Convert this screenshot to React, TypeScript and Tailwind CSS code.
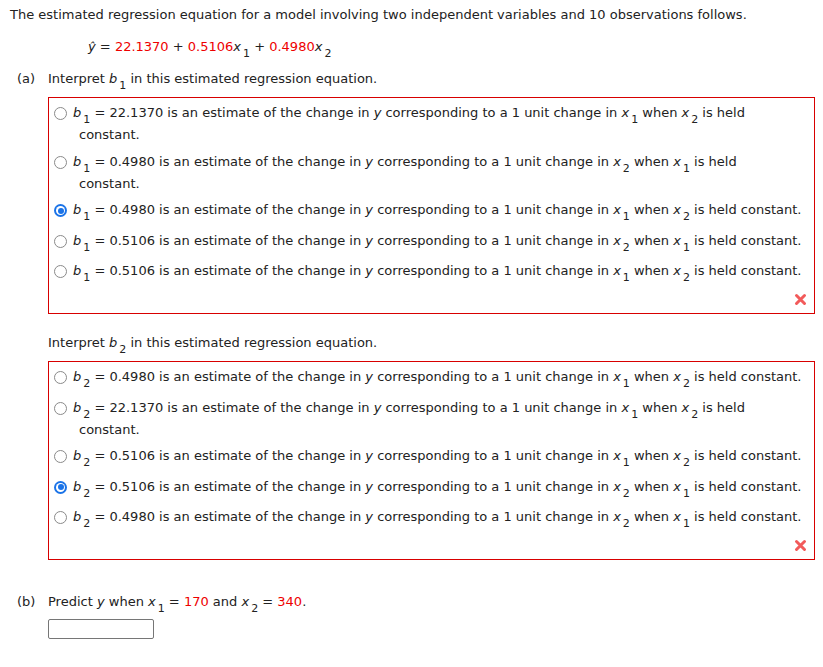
import React from "react";

type Opt = {
  coef: string;
  val: string;
  xi: string;
  xj: string;
  checked?: boolean;
  wrap?: boolean;
};

const partA: Opt[] = [
  { coef: "1", val: "22.1370", xi: "1", xj: "2", wrap: true },
  { coef: "1", val: "0.4980", xi: "2", xj: "1", wrap: true },
  { coef: "1", val: "0.4980", xi: "1", xj: "2", checked: true },
  { coef: "1", val: "0.5106", xi: "2", xj: "1" },
  { coef: "1", val: "0.5106", xi: "1", xj: "2" },
];

const partB: Opt[] = [
  { coef: "2", val: "0.4980", xi: "1", xj: "2" },
  { coef: "2", val: "22.1370", xi: "1", xj: "2", wrap: true },
  { coef: "2", val: "0.5106", xi: "1", xj: "2" },
  { coef: "2", val: "0.5106", xi: "2", xj: "1", checked: true },
  { coef: "2", val: "0.4980", xi: "2", xj: "1" },
];

// subscript that still counts for the line box
function Sub({ c }: { c: string }) {
  return (
    <span className="text-[11px] leading-[13px] align-[-6px] ml-[2px] not-italic">
      {c}
    </span>
  );
}

function V({ v, s }: { v: string; s?: string }) {
  return (
    <span className="whitespace-nowrap">
      <i>{v}</i>
      {s && <Sub c={s} />}
    </span>
  );
}

function Radio({ checked }: { checked?: boolean }) {
  if (checked) {
    return (
      <span className="mt-[3px] w-[13px] h-[13px] shrink-0 rounded-full bg-[#1a73e8] flex items-center justify-center">
        <span className="w-[9px] h-[9px] rounded-full bg-white flex items-center justify-center">
          <span className="w-[6px] h-[6px] rounded-full bg-[#1a73e8]" />
        </span>
      </span>
    );
  }
  return (
    <span className="mt-[3px] w-[13px] h-[13px] shrink-0 rounded-full border border-[#8a8a8a] bg-white" />
  );
}

function Cross() {
  return (
    <svg width="13" height="13" viewBox="0 0 13 13">
      <path
        d="M2.5 2.5 L10.5 10.5 M10.5 2.5 L2.5 10.5"
        stroke="#f25a5a"
        strokeWidth="3"
        strokeLinecap="round"
      />
    </svg>
  );
}

function Option({ o }: { o: Opt }) {
  return (
    <div className="flex items-start gap-[6px]">
      <Radio checked={o.checked} />
      <div className="whitespace-nowrap">
        <V v="b" s={o.coef} /> = {o.val} is an estimate of the change in <i>y</i>{" "}
        corresponding to a 1 unit change in <V v="x" s={o.xi} /> when{" "}
        <V v="x" s={o.xj} /> is held
        {o.wrap ? (
          <>
            <br />
            <span className="pl-[6px]">constant.</span>
          </>
        ) : (
          " constant."
        )}
      </div>
    </div>
  );
}

function AnswerBox({ opts }: { opts: Opt[] }) {
  return (
    <div className="border border-[#d80000] pl-[5px] pr-[7px] pt-[6px] pb-[7px]">
      <div className="flex flex-col gap-[8.5px]">
        {opts.map((o, i) => (
          <Option key={i} o={o} />
        ))}
      </div>
      <div className="flex justify-end mt-[9px]">
        <Cross />
      </div>
    </div>
  );
}

export default function App() {
  return (
    <div className="font-['DejaVu_Sans',Verdana,sans-serif] text-[13px] leading-[18px] text-[#222] bg-white min-h-screen pl-[10px] pr-[8px] pt-[6px]">
      <p>
        The estimated regression equation for a model involving two independent variables
        and 10 observations follows.
      </p>
      <p className="pl-[78px] mt-[14px]">
        <i>ŷ</i> = <span className="text-[#ee0000]">22.1370</span> +{" "}
        <span className="text-[#ee0000]">0.5106</span>
        <V v="x" s="1" /> + <span className="text-[#ee0000]">0.4980</span>
        <V v="x" s="2" />
      </p>

      <div className="flex mt-[10px]">
        <span className="w-[38px] pl-[7px] shrink-0">(a)</span>
        <div className="flex-1">
          <p>
            Interpret <V v="b" s="1" /> in this estimated regression equation.
          </p>
          <div className="mt-[5px]">
            <AnswerBox opts={partA} />
          </div>

          <p className="mt-[20px]">
            Interpret <V v="b" s="2" /> in this estimated regression equation.
          </p>
          <div className="mt-[5px]">
            <AnswerBox opts={partB} />
          </div>
        </div>
      </div>

      <div className="flex mt-[33px]">
        <span className="w-[38px] pl-[7px] shrink-0">(b)</span>
        <div className="flex-1">
          <p>
            Predict <i>y</i> when <V v="x" s="1" /> ={" "}
            <span className="text-[#ee0000]">170</span> and <V v="x" s="2" /> ={" "}
            <span className="text-[#ee0000]">340</span>.
          </p>
          <input
            type="text"
            className="mt-[4px] w-[106px] h-[20px] border border-[#767676] rounded-[2px] outline-none"
          />
        </div>
      </div>
    </div>
  );
}
